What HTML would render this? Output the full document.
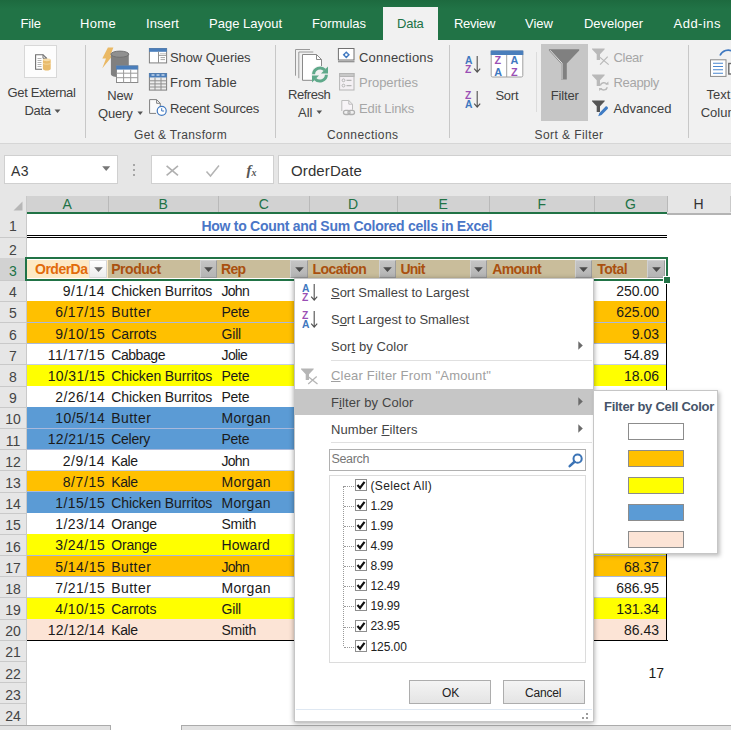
<!DOCTYPE html>
<html><head><meta charset="utf-8"><title>Excel Filter by Color</title>
<style>
html,body{margin:0;padding:0;}
body{width:731px;height:730px;position:relative;overflow:hidden;background:#fff;font-family:"Liberation Sans",sans-serif;}
div,svg{position:absolute;}
</style></head><body>
<div style="position:absolute;left:0.00px;top:0.00px;width:731.00px;height:40.00px;background:linear-gradient(#1d6a3f 0,#217346 9px);"></div>
<div style="position:absolute;left:382.90px;top:7.00px;width:55.10px;height:34.00px;background:#f1f1f1;"></div>
<div style="position:absolute;top:15.00px;line-height:17px;font-size:13.00px;color:#ffffff;white-space:nowrap;letter-spacing:-0.174px;left:20.50px;">File</div>
<div style="position:absolute;top:15.00px;line-height:17px;font-size:13.00px;color:#ffffff;white-space:nowrap;letter-spacing:0.331px;left:80.00px;">Home</div>
<div style="position:absolute;top:15.00px;line-height:17px;font-size:13.00px;color:#ffffff;white-space:nowrap;letter-spacing:0.081px;left:146.00px;">Insert</div>
<div style="position:absolute;top:15.00px;line-height:17px;font-size:13.00px;color:#ffffff;white-space:nowrap;letter-spacing:-0.000px;left:209.00px;">Page Layout</div>
<div style="position:absolute;top:15.00px;line-height:17px;font-size:13.00px;color:#ffffff;white-space:nowrap;letter-spacing:-0.022px;left:312.00px;">Formulas</div>
<div style="position:absolute;top:15.00px;line-height:17px;font-size:13.00px;color:#ffffff;white-space:nowrap;letter-spacing:-0.271px;left:454.00px;">Review</div>
<div style="position:absolute;top:15.00px;line-height:17px;font-size:13.00px;color:#ffffff;white-space:nowrap;letter-spacing:0.014px;left:525.00px;">View</div>
<div style="position:absolute;top:15.00px;line-height:17px;font-size:13.00px;color:#ffffff;white-space:nowrap;letter-spacing:-0.028px;left:584.00px;">Developer</div>
<div style="position:absolute;top:15.00px;line-height:17px;font-size:13.00px;color:#ffffff;white-space:nowrap;letter-spacing:0.489px;left:673.50px;">Add-ins</div>
<div style="position:absolute;top:15.00px;line-height:17px;font-size:13.00px;color:#217346;white-space:nowrap;letter-spacing:-0.240px;left:397.00px;">Data</div>
<div style="position:absolute;left:0.00px;top:40.00px;width:731.00px;height:103.00px;background:#f1f1f1;"></div>
<div style="position:absolute;left:0.00px;top:142.50px;width:731.00px;height:1.00px;background:#d6d6d6;"></div>
<div style="position:absolute;left:0.00px;top:143.50px;width:731.00px;height:52.50px;background:#e6e6e6;"></div>
<div style="position:absolute;left:85.00px;top:45.00px;width:1.00px;height:93.00px;background:#c8c8c8;"></div>
<div style="position:absolute;left:275.00px;top:45.00px;width:1.00px;height:93.00px;background:#c8c8c8;"></div>
<div style="position:absolute;left:449.30px;top:45.00px;width:1.00px;height:93.00px;background:#c8c8c8;"></div>
<div style="position:absolute;left:687.60px;top:45.00px;width:1.00px;height:93.00px;background:#c8c8c8;"></div>
<div style="position:absolute;left:535.50px;top:52.00px;width:1.00px;height:60.00px;background:#dcdcdc;"></div>
<div style="position:absolute;left:24.00px;top:45.20px;width:33.00px;height:32.50px;background:#fdfdfd;border:1px solid #d8d8d8;box-sizing:border-box;"></div>
<svg style="position:absolute;left:33.00px;top:53.00px" width="20" height="19" viewBox="0 0 20 19"><path d="M9 16.2H2.600V1.700h7.400l3.600 3.600v2" fill="#fff" stroke="#6e6e6e" stroke-width="1.100"/><path d="M10 1.700v3.600h3.600" fill="none" stroke="#6e6e6e"/>
<path d="M4.5 5.5h4M4.5 7.5h4M4.5 9.5h4M4.5 11.5h4M4.5 13.5h4" stroke="#b4b4b4" stroke-width="1"/>
<path d="M9.900 6.800v9.2c0 .9 1.700 1.5 3.900 1.5s3.900-.6 3.900-1.5V6.800z" fill="#e9bb6b"/><ellipse cx="13.800" cy="6.800" rx="3.900" ry="1.400" fill="#f6dca8"/><path d="M9.900 9.800c0 .9 1.700 1.400 3.900 1.400s3.900-.5 3.900-1.400" fill="none" stroke="#f6dca8" stroke-width=".8"/></svg>
<div style="position:absolute;top:84.10px;line-height:17px;font-size:13.00px;color:#404040;white-space:nowrap;letter-spacing:-0.355px;left:7.50px;">Get External</div>
<div style="position:absolute;top:101.90px;line-height:17px;font-size:13.00px;color:#404040;white-space:nowrap;letter-spacing:-0.365px;left:24.50px;">Data</div>
<svg style="position:absolute;left:54.20px;top:108.70px" width="8" height="5" viewBox="0 0 8 5"><path d="M0.5 0.5h6l-3 3.5z" fill="#555"/></svg>
<svg style="position:absolute;left:100.00px;top:46.00px" width="40" height="38" viewBox="0 0 40 38"><path d="M7.900 1.400h5.5l-3.100 8h2.5L2.3 22.3 6 12.5H2.3z" fill="#eab965"/>
<path d="M10.900 8.2v20c0 1.700 4 3 9 3s8.900-1.3 8.900-3v-20z" fill="#808080"/><ellipse cx="19.850" cy="8.2" rx="8.950" ry="3.100" fill="#909090" stroke="#6e6e6e" stroke-width=".9"/>
<rect x="16.5" y="19.900" width="21.3" height="16.600" fill="#fff" stroke="#8a8a8a"/><rect x="16.5" y="19.900" width="21.3" height="3.3" fill="#4a7ebb" stroke="#4a7ebb" stroke-width=".6"/>
<path d="M16.5 27.2h21.3M16.5 31.700h21.3M23.600 23.5v13M30.700 23.5v13" stroke="#9a9a9a" stroke-width="1"/></svg>
<div style="position:absolute;top:86.50px;line-height:17px;font-size:13.00px;color:#404040;white-space:nowrap;letter-spacing:-0.102px;left:107.20px;">New</div>
<div style="position:absolute;top:104.50px;line-height:17px;font-size:13.00px;color:#404040;white-space:nowrap;letter-spacing:-0.180px;left:98.00px;">Query</div>
<svg style="position:absolute;left:136.90px;top:110.70px" width="8" height="5" viewBox="0 0 8 5"><path d="M0.5 0.5h5.400l-2.700 3.400z" fill="#555"/></svg>
<svg style="position:absolute;left:148.00px;top:47.00px" width="20" height="18" viewBox="0 0 20 18"><rect x="1.400" y="1.5" width="17.2" height="14.400" fill="#fff" stroke="#808080"/><rect x="1.400" y="1.5" width="17.2" height="3" fill="#4a7ebb" stroke="#4a7ebb" stroke-width=".6"/>
<path d="M10.5 4.5v11.400M10.5 8.3h8" stroke="#909090"/><path d="M12.5 6.5h5" stroke="#a0a0a0" stroke-dasharray="1 1"/><path d="M12.5 10.600h4.5M12.5 12.600h4.5" stroke="#a8a8a8"/></svg>
<svg style="position:absolute;left:148.00px;top:72.00px" width="20" height="20" viewBox="0 0 20 20"><rect x="1.400" y="1.5" width="17.2" height="16.600" fill="#ececec" stroke="#808080"/><rect x="1.400" y="1.5" width="17.2" height="3.600" fill="#4a7ebb" stroke="#4a7ebb" stroke-width=".6"/>
<path d="M3.5 3h3M8.5 3h3M13.5 3h3" stroke="#fff" stroke-width="1"/>
<path d="M1.400 8.800h17.2M1.400 11.900h17.2M1.400 15h17.2M7 5.5v12.600M13 5.5v12.600" stroke="#8e8e8e"/></svg>
<svg style="position:absolute;left:148.00px;top:97.00px" width="20" height="20" viewBox="0 0 20 20"><path d="M8 16.400H1.600V2.600h7l3.700 3.700v3" fill="#fafafa" stroke="#808080"/><path d="M8.600 2.600v3.700h3.700" fill="none" stroke="#808080"/>
<circle cx="13.700" cy="13.800" r="4.5" fill="#fff" stroke="#3f78c0" stroke-width="1.2"/><path d="M13.700 11.2v2.800h2.400" fill="none" stroke="#3f78c0" stroke-width="1"/></svg>
<div style="position:absolute;top:48.50px;line-height:17px;font-size:13.00px;color:#404040;white-space:nowrap;letter-spacing:-0.096px;left:170.00px;">Show Queries</div>
<div style="position:absolute;top:74.00px;line-height:17px;font-size:13.00px;color:#404040;white-space:nowrap;letter-spacing:0.222px;left:170.00px;">From Table</div>
<div style="position:absolute;top:99.50px;line-height:17px;font-size:13.00px;color:#404040;white-space:nowrap;letter-spacing:-0.249px;left:170.00px;">Recent Sources</div>
<div style="position:absolute;top:126.60px;line-height:16px;font-size:12.00px;color:#444;white-space:nowrap;letter-spacing:0.332px;left:134.00px;">Get &amp; Transform</div>
<svg style="position:absolute;left:293.00px;top:47.00px" width="38" height="38" viewBox="0 0 38 38"><path d="M2.5 28.700V2.5h14.5" fill="none" stroke="#9a9a9a"/><path d="M5.800 31.2V5h14.5" fill="none" stroke="#9a9a9a"/>
<path d="M9.5 7.5h14l5 5v20.800h-19z" fill="#fff" stroke="#8a8a8a"/><path d="M23.5 7.5v5h5" fill="none" stroke="#8a8a8a"/>
<circle cx="27" cy="27.5" r="8.800" fill="#f1f1f1"/>
<path d="M20.600 27.3a6.5 6.5 0 0 1 11.3-4.2" fill="none" stroke="#5fa98a" stroke-width="3"/><path d="M35 19.5v7h-7z" fill="#5fa98a"/>
<path d="M33.400 27.700a6.5 6.5 0 0 1-11.3 4.2" fill="none" stroke="#5fa98a" stroke-width="3"/><path d="M19 35.5v-7h7z" fill="#5fa98a"/></svg>
<div style="position:absolute;top:86.40px;line-height:17px;font-size:13.00px;color:#404040;white-space:nowrap;letter-spacing:-0.474px;left:288.00px;">Refresh</div>
<div style="position:absolute;top:104.20px;line-height:17px;font-size:13.00px;color:#404040;white-space:nowrap;letter-spacing:0.084px;left:297.90px;">All</div>
<svg style="position:absolute;left:316.20px;top:110.30px" width="8" height="5" viewBox="0 0 8 5"><path d="M0.5 0.5h5.600l-2.800 3.5z" fill="#555"/></svg>
<svg style="position:absolute;left:336.00px;top:47.00px" width="20" height="18" viewBox="0 0 20 18"><rect x="2.400" y="1.5" width="15.600" height="11.5" fill="#fff" stroke="#707070"/><path d="M2 14.700h16.5" stroke="#8a8a8a" stroke-width="1.2"/>
<path d="M10.3 4.2l3.600 3.600-3.600 3.600-3.600-3.600z" fill="#3f78c0"/><circle cx="10.3" cy="7.800" r="1.3" fill="#fff"/></svg>
<svg style="position:absolute;left:336.00px;top:72.00px" width="20" height="20" viewBox="0 0 20 20"><rect x="3.600" y="1.5" width="14.400" height="16.5" fill="#f4f0f4" stroke="#b5b5b5"/><rect x="3.600" y="1.5" width="14.400" height="3" fill="#c8c8c8" stroke="#b5b5b5"/>
<circle cx="7.5" cy="8.3" r="1.400" fill="none" stroke="#b5b5b5"/><circle cx="7.5" cy="13.600" r="1.400" fill="none" stroke="#b5b5b5"/><path d="M10.5 8.3h5M10.5 13.600h5" stroke="#b5b5b5" stroke-width="1.2"/></svg>
<svg style="position:absolute;left:336.00px;top:97.00px" width="22" height="20" viewBox="0 0 22 20"><path d="M5.800 14V3.5h7l3.700 3.700v5.5" fill="#f7f4f7" stroke="#bdbdbd"/><path d="M12.800 3.5v3.700h3.700" fill="none" stroke="#bdbdbd"/>
<rect x="7.5" y="13.3" width="6.5" height="4.2" rx="2.100" fill="none" stroke="#b0b0b0" stroke-width="1.3"/><rect x="12" y="13.3" width="6.5" height="4.2" rx="2.100" fill="none" stroke="#b0b0b0" stroke-width="1.3"/></svg>
<div style="position:absolute;top:48.50px;line-height:17px;font-size:13.00px;color:#404040;white-space:nowrap;letter-spacing:0.203px;left:359.00px;">Connections</div>
<div style="position:absolute;top:74.00px;line-height:17px;font-size:13.00px;color:#a6a6a6;white-space:nowrap;letter-spacing:-0.025px;left:359.00px;">Properties</div>
<div style="position:absolute;top:99.50px;line-height:17px;font-size:13.00px;color:#a6a6a6;white-space:nowrap;letter-spacing:-0.136px;left:359.00px;">Edit Links</div>
<div style="position:absolute;top:126.60px;line-height:16px;font-size:12.00px;color:#444;white-space:nowrap;letter-spacing:0.436px;left:327.00px;">Connections</div>
<svg style="position:absolute;left:464.70px;top:55.10px" width="18" height="19" viewBox="0 0 18 19"><text x="0" y="8.6" font-family="Liberation Sans,sans-serif" font-size="10.3" font-weight="bold" fill="#3f78c0">A</text>
<text x="0" y="17.900" font-family="Liberation Sans,sans-serif" font-size="10.3" font-weight="bold" fill="#9a4fb4">Z</text>
<path d="M12.2 1v16M9.2 13.600l3 3.600 3-3.600" fill="none" stroke="#505050" stroke-width="1.100"/></svg>
<svg style="position:absolute;left:464.70px;top:89.60px" width="18" height="19" viewBox="0 0 18 19"><text x="0" y="8.6" font-family="Liberation Sans,sans-serif" font-size="10.3" font-weight="bold" fill="#9a4fb4">Z</text>
<text x="0" y="17.900" font-family="Liberation Sans,sans-serif" font-size="10.3" font-weight="bold" fill="#3f78c0">A</text>
<path d="M12.2 1v16M9.2 13.600l3 3.600 3-3.600" fill="none" stroke="#505050" stroke-width="1.100"/></svg>
<svg style="position:absolute;left:490.00px;top:49.00px" width="34" height="30" viewBox="0 0 34 30"><path d="M1.2 2v24.5a1.5 1.5 0 0 0 1.5 1.5h28.600a1.5 1.5 0 0 0 1.5-1.5V2z" fill="#fff" stroke="#a0a0a0"/><rect x="0.700" y="1.5" width="32.600" height="4.5" fill="#4a7ebb"/>
<path d="M16.700 6v22" stroke="#a0a0a0"/>
<text x="4.5" y="15.2" font-family="Liberation Sans,sans-serif" font-size="10.800" font-weight="bold" fill="#9a4fb4">Z</text><text x="4.2" y="26.600" font-family="Liberation Sans,sans-serif" font-size="10.800" font-weight="bold" fill="#3f78c0">A</text>
<text x="20.600" y="15.2" font-family="Liberation Sans,sans-serif" font-size="10.800" font-weight="bold" fill="#3f78c0">A</text><text x="21" y="26.600" font-family="Liberation Sans,sans-serif" font-size="10.800" font-weight="bold" fill="#9a4fb4">Z</text></svg>
<div style="position:absolute;top:86.70px;line-height:17px;font-size:13.00px;color:#404040;white-space:nowrap;letter-spacing:-0.210px;left:495.40px;">Sort</div>
<div style="position:absolute;left:541.20px;top:44.20px;width:46.60px;height:77.00px;background:#c6c6c6;"></div>
<svg style="position:absolute;left:547.00px;top:48.00px" width="36" height="33" viewBox="0 0 36 33"><path d="M1.900 1.2h30.3v1.3L19.800 15.600v15.800h-5.800V15.600L1.900 2.5z" fill="#808080"/><path d="M3 2.2L15 15.2v16" fill="none" stroke="#e4e4e4" stroke-width="1"/></svg>
<div style="position:absolute;top:86.70px;line-height:17px;font-size:13.00px;color:#404040;white-space:nowrap;letter-spacing:-0.148px;left:550.80px;">Filter</div>
<svg style="position:absolute;left:592.30px;top:48.00px" width="19" height="19" viewBox="0 0 19 19"><path d="M0 0.400h12.700v0.800L8 6.2v5.800H4.700V6.2L0 1.2z" fill="#b9b9b9"/><path d="M7.100 8.600l9.600 8M15.700 8.600l-7.600 8" stroke="#b9b9b9" stroke-width="1.2"/></svg>
<svg style="position:absolute;left:592.30px;top:73.80px" width="19" height="19" viewBox="0 0 19 19"><path d="M0 0.400h12.700v0.800L8 6.2v5.800H4.700V6.2L0 1.2z" fill="#b9b9b9"/><path d="M8.3 11.5a3.700 3.700 0 0 1 6.600-1.2M15.3 13.2a3.700 3.700 0 0 1-6.600 1.2" fill="none" stroke="#b9b9b9" stroke-width="1.400"/><path d="M13.3 10.5l3.3 0.3-0.3-3.2zM10.3 14.2l-3.3-0.3 0.3 3.2z" fill="#b9b9b9"/></svg>
<svg style="position:absolute;left:592.30px;top:99.60px" width="19" height="19" viewBox="0 0 19 19"><path d="M0 0.400h12.700v0.800L8 6.2v5.800H4.700V6.2L0 1.2z" fill="#555"/><path d="M6.2 16.3l1.2-3.400 6.2-6.3c1-1 3.2 1.2 2.2 2.2l-6.2 6.3z" fill="#3f7cc4"/></svg>
<div style="position:absolute;top:48.50px;line-height:17px;font-size:13.00px;color:#a6a6a6;white-space:nowrap;letter-spacing:-0.313px;left:613.50px;">Clear</div>
<div style="position:absolute;top:74.00px;line-height:17px;font-size:13.00px;color:#a6a6a6;white-space:nowrap;letter-spacing:-0.314px;left:613.50px;">Reapply</div>
<div style="position:absolute;top:99.50px;line-height:17px;font-size:13.00px;color:#404040;white-space:nowrap;letter-spacing:0.022px;left:613.50px;">Advanced</div>
<div style="position:absolute;top:126.60px;line-height:16px;font-size:12.00px;color:#444;white-space:nowrap;letter-spacing:0.435px;left:534.50px;">Sort &amp; Filter</div>
<svg style="position:absolute;left:709.00px;top:48.00px" width="24" height="30" viewBox="0 0 24 30"><path d="M11 7.5a9 9 0 0 1 13-4" fill="none" stroke="#3f78c0" stroke-width="1.600"/>
<rect x="1.5" y="11.800" width="15.5" height="16.600" fill="#fff" stroke="#8a8a8a"/><path d="M4 15.3h10M4 18.5h10M4 21.700h10M4 25.3h10" stroke="#4a86cf" stroke-width="1.100"/><rect x="19.800" y="15.5" width="6" height="10.5" fill="#fff" stroke="#6a6a6a" stroke-width="1.400"/></svg>
<div style="position:absolute;top:86.30px;line-height:17px;font-size:13.00px;color:#404040;white-space:nowrap;left:706.50px;">Text</div>
<div style="position:absolute;top:104.30px;line-height:17px;font-size:13.00px;color:#404040;white-space:nowrap;left:700.70px;">Columns</div>
<div style="position:absolute;left:4.00px;top:155.30px;width:113.50px;height:29.00px;background:#fff;border:1px solid #d0d0d0;box-sizing:border-box;"></div>
<div style="position:absolute;left:151.00px;top:155.30px;width:122.50px;height:29.00px;background:#fff;border:1px solid #d0d0d0;box-sizing:border-box;"></div>
<div style="position:absolute;left:277.50px;top:155.30px;width:460.00px;height:29.00px;background:#fff;border:1px solid #d0d0d0;box-sizing:border-box;"></div>
<div style="position:absolute;top:161.50px;line-height:18px;font-size:14.00px;color:#333;white-space:nowrap;letter-spacing:0.438px;left:11.00px;">A3</div>
<svg style="position:absolute;left:101.80px;top:166.20px" width="9" height="6" viewBox="0 0 9 6"><path d="M0.2 0.2h8l-4 4.900z" fill="#777"/></svg>
<div style="position:absolute;left:133.20px;top:164.00px;width:2.00px;height:2.00px;background:#a6a6a6;"></div>
<div style="position:absolute;left:133.20px;top:169.00px;width:2.00px;height:2.00px;background:#a6a6a6;"></div>
<div style="position:absolute;left:133.20px;top:173.60px;width:2.00px;height:2.00px;background:#a6a6a6;"></div>
<svg style="position:absolute;left:165.00px;top:163.50px" width="15" height="14" viewBox="0 0 15 14"><path d="M1.600 1.800l11.400 9.600M13 1.800L1.600 11.400" stroke="#b0b0b0" stroke-width="1.600" fill="none"/></svg>
<svg style="position:absolute;left:205.00px;top:163.50px" width="16" height="14" viewBox="0 0 16 14"><path d="M1.5 7.5l4 4.5L14 1.5" stroke="#b4b4b4" stroke-width="1.5" fill="none"/></svg>
<div style="position:absolute;top:160.50px;line-height:19px;font-size:15.00px;color:#555;white-space:nowrap;left:246.50px;font-family:'Liberation Serif',serif;font-style:italic;font-weight:bold;">f</div>
<div style="position:absolute;top:165.50px;line-height:14px;font-size:10.00px;color:#555;white-space:nowrap;left:251.50px;font-family:'Liberation Serif',serif;font-style:italic;font-weight:bold;">x</div>
<div style="position:absolute;top:161.00px;line-height:19px;font-size:15.00px;color:#333;white-space:nowrap;letter-spacing:0.108px;left:291.00px;">OrderDate</div>
<div style="position:absolute;left:0.00px;top:196.00px;width:731.00px;height:17.00px;background:#e6e6e6;"></div>
<div style="position:absolute;left:26.50px;top:196.00px;width:640.50px;height:16.00px;background:#d2d2d2;"></div>
<div style="position:absolute;left:667.00px;top:213.20px;width:64.00px;height:1.50px;background:#b4b4b4;"></div>
<div style="position:absolute;left:26.50px;top:211.80px;width:640.50px;height:2.50px;background:#217346;"></div>
<div style="position:absolute;top:195.00px;line-height:18px;font-size:14.00px;color:#217346;white-space:nowrap;left:67.25px;width:200px;margin-left:-100px;text-align:center;">A</div>
<div style="position:absolute;left:107.50px;top:196.00px;width:1.00px;height:16.00px;background:#b9b9b9;"></div>
<div style="position:absolute;top:195.00px;line-height:18px;font-size:14.00px;color:#217346;white-space:nowrap;left:163.25px;width:200px;margin-left:-100px;text-align:center;">B</div>
<div style="position:absolute;left:218.00px;top:196.00px;width:1.00px;height:16.00px;background:#b9b9b9;"></div>
<div style="position:absolute;top:195.00px;line-height:18px;font-size:14.00px;color:#217346;white-space:nowrap;left:263.75px;width:200px;margin-left:-100px;text-align:center;">C</div>
<div style="position:absolute;left:308.50px;top:196.00px;width:1.00px;height:16.00px;background:#b9b9b9;"></div>
<div style="position:absolute;top:195.00px;line-height:18px;font-size:14.00px;color:#217346;white-space:nowrap;left:353.00px;width:200px;margin-left:-100px;text-align:center;">D</div>
<div style="position:absolute;left:396.50px;top:196.00px;width:1.00px;height:16.00px;background:#b9b9b9;"></div>
<div style="position:absolute;top:195.00px;line-height:18px;font-size:14.00px;color:#217346;white-space:nowrap;left:443.25px;width:200px;margin-left:-100px;text-align:center;">E</div>
<div style="position:absolute;left:489.00px;top:196.00px;width:1.00px;height:16.00px;background:#b9b9b9;"></div>
<div style="position:absolute;top:195.00px;line-height:18px;font-size:14.00px;color:#217346;white-space:nowrap;left:541.75px;width:200px;margin-left:-100px;text-align:center;">F</div>
<div style="position:absolute;left:593.50px;top:196.00px;width:1.00px;height:16.00px;background:#b9b9b9;"></div>
<div style="position:absolute;top:195.00px;line-height:18px;font-size:14.00px;color:#217346;white-space:nowrap;left:630.50px;width:200px;margin-left:-100px;text-align:center;">G</div>
<div style="position:absolute;left:666.50px;top:196.00px;width:1.00px;height:16.00px;background:#b9b9b9;"></div>
<div style="position:absolute;top:195.00px;line-height:18px;font-size:14.00px;color:#333;white-space:nowrap;left:698.50px;width:200px;margin-left:-100px;text-align:center;">H</div>
<div style="position:absolute;left:729.50px;top:196.00px;width:1.00px;height:16.00px;background:#c9c9c9;"></div>
<svg style="position:absolute;left:13.00px;top:200.50px" width="10" height="10" viewBox="0 0 10 10"><path d="M9.5 0.5v9h-9z" fill="#b7b7b7"/></svg>
<div style="position:absolute;left:26.00px;top:196.00px;width:1.00px;height:17.00px;background:#c9c9c9;"></div>
<div style="position:absolute;left:0.00px;top:213.00px;width:26.50px;height:517.00px;background:#e6e6e6;"></div>
<div style="position:absolute;left:0.00px;top:236.50px;width:26.50px;height:1.00px;background:#c9c9c9;"></div>
<div style="position:absolute;top:217.20px;line-height:18px;font-size:14.00px;color:#444;white-space:nowrap;left:13.00px;width:200px;margin-left:-100px;text-align:center;">1</div>
<div style="position:absolute;left:0.00px;top:257.50px;width:26.50px;height:1.00px;background:#c9c9c9;"></div>
<div style="position:absolute;top:240.80px;line-height:18px;font-size:14.00px;color:#444;white-space:nowrap;left:13.00px;width:200px;margin-left:-100px;text-align:center;">2</div>
<div style="position:absolute;left:0.00px;top:258.00px;width:26.50px;height:22.20px;background:#d2d2d2;"></div>
<div style="position:absolute;left:25.00px;top:258.00px;width:2.00px;height:22.20px;background:#217346;"></div>
<div style="position:absolute;left:0.00px;top:279.70px;width:26.50px;height:1.00px;background:#c9c9c9;"></div>
<div style="position:absolute;top:262.00px;line-height:18px;font-size:14.00px;color:#217346;white-space:nowrap;left:13.00px;width:200px;margin-left:-100px;text-align:center;">3</div>
<div style="position:absolute;left:0.00px;top:300.88px;width:26.50px;height:1.00px;background:#c9c9c9;"></div>
<div style="position:absolute;top:283.29px;line-height:18px;font-size:14.00px;color:#444;white-space:nowrap;left:13.00px;width:200px;margin-left:-100px;text-align:center;">4</div>
<div style="position:absolute;left:0.00px;top:322.07px;width:26.50px;height:1.00px;background:#c9c9c9;"></div>
<div style="position:absolute;top:304.48px;line-height:18px;font-size:14.00px;color:#444;white-space:nowrap;left:13.00px;width:200px;margin-left:-100px;text-align:center;">5</div>
<div style="position:absolute;left:0.00px;top:343.25px;width:26.50px;height:1.00px;background:#c9c9c9;"></div>
<div style="position:absolute;top:325.66px;line-height:18px;font-size:14.00px;color:#444;white-space:nowrap;left:13.00px;width:200px;margin-left:-100px;text-align:center;">6</div>
<div style="position:absolute;left:0.00px;top:364.44px;width:26.50px;height:1.00px;background:#c9c9c9;"></div>
<div style="position:absolute;top:346.85px;line-height:18px;font-size:14.00px;color:#444;white-space:nowrap;left:13.00px;width:200px;margin-left:-100px;text-align:center;">7</div>
<div style="position:absolute;left:0.00px;top:385.62px;width:26.50px;height:1.00px;background:#c9c9c9;"></div>
<div style="position:absolute;top:368.03px;line-height:18px;font-size:14.00px;color:#444;white-space:nowrap;left:13.00px;width:200px;margin-left:-100px;text-align:center;">8</div>
<div style="position:absolute;left:0.00px;top:406.81px;width:26.50px;height:1.00px;background:#c9c9c9;"></div>
<div style="position:absolute;top:389.22px;line-height:18px;font-size:14.00px;color:#444;white-space:nowrap;left:13.00px;width:200px;margin-left:-100px;text-align:center;">9</div>
<div style="position:absolute;left:0.00px;top:428.00px;width:26.50px;height:1.00px;background:#c9c9c9;"></div>
<div style="position:absolute;top:410.40px;line-height:18px;font-size:14.00px;color:#444;white-space:nowrap;left:13.00px;width:200px;margin-left:-100px;text-align:center;">10</div>
<div style="position:absolute;left:0.00px;top:449.18px;width:26.50px;height:1.00px;background:#c9c9c9;"></div>
<div style="position:absolute;top:431.59px;line-height:18px;font-size:14.00px;color:#444;white-space:nowrap;left:13.00px;width:200px;margin-left:-100px;text-align:center;">11</div>
<div style="position:absolute;left:0.00px;top:470.37px;width:26.50px;height:1.00px;background:#c9c9c9;"></div>
<div style="position:absolute;top:452.77px;line-height:18px;font-size:14.00px;color:#444;white-space:nowrap;left:13.00px;width:200px;margin-left:-100px;text-align:center;">12</div>
<div style="position:absolute;left:0.00px;top:491.55px;width:26.50px;height:1.00px;background:#c9c9c9;"></div>
<div style="position:absolute;top:473.96px;line-height:18px;font-size:14.00px;color:#444;white-space:nowrap;left:13.00px;width:200px;margin-left:-100px;text-align:center;">13</div>
<div style="position:absolute;left:0.00px;top:512.74px;width:26.50px;height:1.00px;background:#c9c9c9;"></div>
<div style="position:absolute;top:495.14px;line-height:18px;font-size:14.00px;color:#444;white-space:nowrap;left:13.00px;width:200px;margin-left:-100px;text-align:center;">14</div>
<div style="position:absolute;left:0.00px;top:533.92px;width:26.50px;height:1.00px;background:#c9c9c9;"></div>
<div style="position:absolute;top:516.33px;line-height:18px;font-size:14.00px;color:#444;white-space:nowrap;left:13.00px;width:200px;margin-left:-100px;text-align:center;">15</div>
<div style="position:absolute;left:0.00px;top:555.11px;width:26.50px;height:1.00px;background:#c9c9c9;"></div>
<div style="position:absolute;top:537.51px;line-height:18px;font-size:14.00px;color:#444;white-space:nowrap;left:13.00px;width:200px;margin-left:-100px;text-align:center;">16</div>
<div style="position:absolute;left:0.00px;top:576.29px;width:26.50px;height:1.00px;background:#c9c9c9;"></div>
<div style="position:absolute;top:558.70px;line-height:18px;font-size:14.00px;color:#444;white-space:nowrap;left:13.00px;width:200px;margin-left:-100px;text-align:center;">17</div>
<div style="position:absolute;left:0.00px;top:597.47px;width:26.50px;height:1.00px;background:#c9c9c9;"></div>
<div style="position:absolute;top:579.88px;line-height:18px;font-size:14.00px;color:#444;white-space:nowrap;left:13.00px;width:200px;margin-left:-100px;text-align:center;">18</div>
<div style="position:absolute;left:0.00px;top:618.66px;width:26.50px;height:1.00px;background:#c9c9c9;"></div>
<div style="position:absolute;top:601.07px;line-height:18px;font-size:14.00px;color:#444;white-space:nowrap;left:13.00px;width:200px;margin-left:-100px;text-align:center;">19</div>
<div style="position:absolute;left:0.00px;top:639.85px;width:26.50px;height:1.00px;background:#c9c9c9;"></div>
<div style="position:absolute;top:622.25px;line-height:18px;font-size:14.00px;color:#444;white-space:nowrap;left:13.00px;width:200px;margin-left:-100px;text-align:center;">20</div>
<div style="position:absolute;left:0.00px;top:661.03px;width:26.50px;height:1.00px;background:#c9c9c9;"></div>
<div style="position:absolute;top:643.44px;line-height:18px;font-size:14.00px;color:#444;white-space:nowrap;left:13.00px;width:200px;margin-left:-100px;text-align:center;">21</div>
<div style="position:absolute;left:0.00px;top:682.21px;width:26.50px;height:1.00px;background:#c9c9c9;"></div>
<div style="position:absolute;top:664.62px;line-height:18px;font-size:14.00px;color:#444;white-space:nowrap;left:13.00px;width:200px;margin-left:-100px;text-align:center;">22</div>
<div style="position:absolute;left:0.00px;top:703.40px;width:26.50px;height:1.00px;background:#c9c9c9;"></div>
<div style="position:absolute;top:685.81px;line-height:18px;font-size:14.00px;color:#444;white-space:nowrap;left:13.00px;width:200px;margin-left:-100px;text-align:center;">23</div>
<div style="position:absolute;left:0.00px;top:724.70px;width:26.50px;height:1.00px;background:#c9c9c9;"></div>
<div style="position:absolute;top:707.05px;line-height:18px;font-size:14.00px;color:#444;white-space:nowrap;left:13.00px;width:200px;margin-left:-100px;text-align:center;">24</div>
<div style="position:absolute;left:26.00px;top:213.00px;width:1.00px;height:512.00px;background:#c9c9c9;"></div>
<div style="position:absolute;left:27.00px;top:214.00px;width:639.00px;height:23.00px;background:#fff;"></div>
<div style="position:absolute;top:217.00px;line-height:18px;font-size:14.00px;color:#4a76c7;white-space:nowrap;letter-spacing:-0.281px;font-weight:bold;left:201.50px;">How to Count and Sum Colored cells in Excel</div>
<div style="position:absolute;left:27.00px;top:234.50px;width:640.00px;height:1.20px;background:#000;"></div>
<div style="position:absolute;left:27.00px;top:236.80px;width:640.00px;height:1.20px;background:#000;"></div>
<div style="position:absolute;left:27.00px;top:238.00px;width:639.00px;height:19.50px;background:#fff;"></div>
<div style="position:absolute;left:27.00px;top:260.20px;width:638.20px;height:17.60px;background:#c9bd9b;"></div>
<div style="position:absolute;left:27.00px;top:260.20px;width:81.00px;height:17.60px;background:#fde9c4;"></div>
<div style="position:absolute;top:259.90px;line-height:18px;font-size:14.00px;color:#e26b0a;white-space:nowrap;letter-spacing:-0.503px;font-weight:bold;left:35.00px;">OrderDa</div>
<div style="position:absolute;top:259.90px;line-height:18px;font-size:14.00px;color:#a9500f;white-space:nowrap;letter-spacing:-0.484px;font-weight:bold;left:111.25px;">Product</div>
<div style="position:absolute;top:259.90px;line-height:18px;font-size:14.00px;color:#a9500f;white-space:nowrap;letter-spacing:-0.649px;font-weight:bold;left:221.00px;">Rep</div>
<div style="position:absolute;top:259.90px;line-height:18px;font-size:14.00px;color:#a9500f;white-space:nowrap;letter-spacing:-0.573px;font-weight:bold;left:312.50px;">Location</div>
<div style="position:absolute;top:259.90px;line-height:18px;font-size:14.00px;color:#a9500f;white-space:nowrap;letter-spacing:-0.804px;font-weight:bold;left:400.50px;">Unit</div>
<div style="position:absolute;top:259.90px;line-height:18px;font-size:14.00px;color:#a9500f;white-space:nowrap;letter-spacing:-0.688px;font-weight:bold;left:492.25px;">Amount</div>
<div style="position:absolute;top:259.90px;line-height:18px;font-size:14.00px;color:#a9500f;white-space:nowrap;letter-spacing:-0.481px;font-weight:bold;left:597.25px;">Total</div>
<div style="position:absolute;left:89.00px;top:260.20px;width:17.50px;height:17.60px;background:linear-gradient(#ffffff,#ececec);border:1px solid #e2e2e2;border-right-color:#d6d6d6;border-bottom-color:#d6d6d6;box-sizing:border-box;"></div>
<svg style="position:absolute;left:93.50px;top:266.70px" width="9" height="6" viewBox="0 0 9 6"><path d="M0.2 0.3h8.600l-4.3 4.600z" fill="#6a6a6a"/></svg>
<div style="position:absolute;left:199.75px;top:260.20px;width:17.50px;height:17.60px;background:linear-gradient(#c4c4c4,#b4b4b4);border:1px solid #d0d0d0;border-right-color:#9c9c9c;border-bottom-color:#9c9c9c;box-sizing:border-box;"></div>
<svg style="position:absolute;left:204.25px;top:266.70px" width="9" height="6" viewBox="0 0 9 6"><path d="M0.2 0.3h8.600l-4.3 4.600z" fill="#4a4a4a"/></svg>
<div style="position:absolute;left:290.25px;top:260.20px;width:17.50px;height:17.60px;background:linear-gradient(#c4c4c4,#b4b4b4);border:1px solid #d0d0d0;border-right-color:#9c9c9c;border-bottom-color:#9c9c9c;box-sizing:border-box;"></div>
<svg style="position:absolute;left:294.75px;top:266.70px" width="9" height="6" viewBox="0 0 9 6"><path d="M0.2 0.3h8.600l-4.3 4.600z" fill="#4a4a4a"/></svg>
<div style="position:absolute;left:378.50px;top:260.20px;width:17.50px;height:17.60px;background:linear-gradient(#c4c4c4,#b4b4b4);border:1px solid #d0d0d0;border-right-color:#9c9c9c;border-bottom-color:#9c9c9c;box-sizing:border-box;"></div>
<svg style="position:absolute;left:383.00px;top:266.70px" width="9" height="6" viewBox="0 0 9 6"><path d="M0.2 0.3h8.600l-4.3 4.600z" fill="#4a4a4a"/></svg>
<div style="position:absolute;left:469.75px;top:260.20px;width:17.50px;height:17.60px;background:linear-gradient(#c4c4c4,#b4b4b4);border:1px solid #d0d0d0;border-right-color:#9c9c9c;border-bottom-color:#9c9c9c;box-sizing:border-box;"></div>
<svg style="position:absolute;left:474.25px;top:266.70px" width="9" height="6" viewBox="0 0 9 6"><path d="M0.2 0.3h8.600l-4.3 4.600z" fill="#4a4a4a"/></svg>
<div style="position:absolute;left:574.50px;top:260.20px;width:17.50px;height:17.60px;background:linear-gradient(#c4c4c4,#b4b4b4);border:1px solid #d0d0d0;border-right-color:#9c9c9c;border-bottom-color:#9c9c9c;box-sizing:border-box;"></div>
<svg style="position:absolute;left:579.00px;top:266.70px" width="9" height="6" viewBox="0 0 9 6"><path d="M0.2 0.3h8.600l-4.3 4.600z" fill="#4a4a4a"/></svg>
<div style="position:absolute;left:647.40px;top:260.20px;width:17.50px;height:17.60px;background:linear-gradient(#c4c4c4,#b4b4b4);border:1px solid #d0d0d0;border-right-color:#9c9c9c;border-bottom-color:#9c9c9c;box-sizing:border-box;"></div>
<svg style="position:absolute;left:651.90px;top:266.70px" width="9" height="6" viewBox="0 0 9 6"><path d="M0.2 0.3h8.600l-4.3 4.600z" fill="#4a4a4a"/></svg>
<div style="position:absolute;left:27.00px;top:280.20px;width:639.30px;height:21.19px;background:#ffffff;"></div>
<div style="position:absolute;left:27.00px;top:300.78px;width:639.30px;height:1.00px;background:#c5d0e6;"></div>
<div style="position:absolute;top:282.19px;line-height:18px;font-size:14.00px;color:#1a1a1a;white-space:nowrap;letter-spacing:0.596px;left:62.70px;">9/1/14</div>
<div style="position:absolute;top:282.19px;line-height:18px;font-size:14.00px;color:#1a1a1a;white-space:nowrap;letter-spacing:-0.106px;left:111.25px;">Chicken Burritos</div>
<div style="position:absolute;top:282.19px;line-height:18px;font-size:14.00px;color:#1a1a1a;white-space:nowrap;letter-spacing:-0.715px;left:221.50px;">John</div>
<div style="position:absolute;top:282.19px;line-height:18px;font-size:14.00px;color:#1a1a1a;white-space:nowrap;right:72.00px;text-align:right;">250.00</div>
<div style="position:absolute;left:27.00px;top:301.38px;width:639.30px;height:21.19px;background:#ffc000;"></div>
<div style="position:absolute;left:27.00px;top:321.97px;width:639.30px;height:1.00px;background:#a9b9dc;"></div>
<div style="position:absolute;top:303.38px;line-height:18px;font-size:14.00px;color:#1a1a1a;white-space:nowrap;letter-spacing:0.470px;left:55.20px;">6/17/15</div>
<div style="position:absolute;top:303.38px;line-height:18px;font-size:14.00px;color:#1a1a1a;white-space:nowrap;letter-spacing:0.441px;left:111.25px;">Butter</div>
<div style="position:absolute;top:303.38px;line-height:18px;font-size:14.00px;color:#1a1a1a;white-space:nowrap;letter-spacing:-0.262px;left:221.50px;">Pete</div>
<div style="position:absolute;top:303.38px;line-height:18px;font-size:14.00px;color:#1a1a1a;white-space:nowrap;right:72.00px;text-align:right;">625.00</div>
<div style="position:absolute;left:27.00px;top:322.57px;width:639.30px;height:21.19px;background:#ffc000;"></div>
<div style="position:absolute;left:27.00px;top:343.15px;width:639.30px;height:1.00px;background:#a9b9dc;"></div>
<div style="position:absolute;top:324.56px;line-height:18px;font-size:14.00px;color:#1a1a1a;white-space:nowrap;letter-spacing:0.470px;left:55.20px;">9/10/15</div>
<div style="position:absolute;top:324.56px;line-height:18px;font-size:14.00px;color:#1a1a1a;white-space:nowrap;letter-spacing:-0.128px;left:111.25px;">Carrots</div>
<div style="position:absolute;top:324.56px;line-height:18px;font-size:14.00px;color:#1a1a1a;white-space:nowrap;letter-spacing:-0.180px;left:221.50px;">Gill</div>
<div style="position:absolute;top:324.56px;line-height:18px;font-size:14.00px;color:#1a1a1a;white-space:nowrap;right:72.00px;text-align:right;">9.03</div>
<div style="position:absolute;left:27.00px;top:343.75px;width:639.30px;height:21.19px;background:#ffffff;"></div>
<div style="position:absolute;left:27.00px;top:364.34px;width:639.30px;height:1.00px;background:#c5d0e6;"></div>
<div style="position:absolute;top:345.75px;line-height:18px;font-size:14.00px;color:#1a1a1a;white-space:nowrap;letter-spacing:0.505px;left:47.70px;">11/17/15</div>
<div style="position:absolute;top:345.75px;line-height:18px;font-size:14.00px;color:#1a1a1a;white-space:nowrap;letter-spacing:-0.440px;left:111.25px;">Cabbage</div>
<div style="position:absolute;top:345.75px;line-height:18px;font-size:14.00px;color:#1a1a1a;white-space:nowrap;letter-spacing:-0.609px;left:221.50px;">Jolie</div>
<div style="position:absolute;top:345.75px;line-height:18px;font-size:14.00px;color:#1a1a1a;white-space:nowrap;right:72.00px;text-align:right;">54.89</div>
<div style="position:absolute;left:27.00px;top:364.94px;width:639.30px;height:21.19px;background:#ffff00;"></div>
<div style="position:absolute;left:27.00px;top:385.52px;width:639.30px;height:1.00px;background:#a9b9dc;"></div>
<div style="position:absolute;top:366.93px;line-height:18px;font-size:14.00px;color:#1a1a1a;white-space:nowrap;letter-spacing:0.375px;left:47.70px;">10/31/15</div>
<div style="position:absolute;top:366.93px;line-height:18px;font-size:14.00px;color:#1a1a1a;white-space:nowrap;letter-spacing:-0.106px;left:111.25px;">Chicken Burritos</div>
<div style="position:absolute;top:366.93px;line-height:18px;font-size:14.00px;color:#1a1a1a;white-space:nowrap;letter-spacing:-0.262px;left:221.50px;">Pete</div>
<div style="position:absolute;top:366.93px;line-height:18px;font-size:14.00px;color:#1a1a1a;white-space:nowrap;right:72.00px;text-align:right;">18.06</div>
<div style="position:absolute;left:27.00px;top:386.12px;width:639.30px;height:21.18px;background:#ffffff;"></div>
<div style="position:absolute;left:27.00px;top:406.71px;width:639.30px;height:1.00px;background:#c5d0e6;"></div>
<div style="position:absolute;top:388.12px;line-height:18px;font-size:14.00px;color:#1a1a1a;white-space:nowrap;letter-spacing:0.470px;left:55.20px;">2/26/14</div>
<div style="position:absolute;top:388.12px;line-height:18px;font-size:14.00px;color:#1a1a1a;white-space:nowrap;letter-spacing:-0.106px;left:111.25px;">Chicken Burritos</div>
<div style="position:absolute;top:388.12px;line-height:18px;font-size:14.00px;color:#1a1a1a;white-space:nowrap;letter-spacing:-0.262px;left:221.50px;">Pete</div>
<div style="position:absolute;left:27.00px;top:407.31px;width:639.30px;height:21.19px;background:#5b9bd5;"></div>
<div style="position:absolute;left:27.00px;top:427.89px;width:639.30px;height:1.00px;background:#a9b9dc;"></div>
<div style="position:absolute;top:409.30px;line-height:18px;font-size:14.00px;color:#1a1a1a;white-space:nowrap;letter-spacing:0.470px;left:55.20px;">10/5/14</div>
<div style="position:absolute;top:409.30px;line-height:18px;font-size:14.00px;color:#1a1a1a;white-space:nowrap;letter-spacing:0.441px;left:111.25px;">Butter</div>
<div style="position:absolute;top:409.30px;line-height:18px;font-size:14.00px;color:#1a1a1a;white-space:nowrap;letter-spacing:0.338px;left:221.50px;">Morgan</div>
<div style="position:absolute;left:27.00px;top:428.50px;width:639.30px;height:21.18px;background:#5b9bd5;"></div>
<div style="position:absolute;left:27.00px;top:449.08px;width:639.30px;height:1.00px;background:#a9b9dc;"></div>
<div style="position:absolute;top:430.49px;line-height:18px;font-size:14.00px;color:#1a1a1a;white-space:nowrap;letter-spacing:0.375px;left:47.70px;">12/21/15</div>
<div style="position:absolute;top:430.49px;line-height:18px;font-size:14.00px;color:#1a1a1a;white-space:nowrap;letter-spacing:-0.284px;left:111.25px;">Celery</div>
<div style="position:absolute;top:430.49px;line-height:18px;font-size:14.00px;color:#1a1a1a;white-space:nowrap;letter-spacing:-0.262px;left:221.50px;">Pete</div>
<div style="position:absolute;left:27.00px;top:449.68px;width:639.30px;height:21.19px;background:#ffffff;"></div>
<div style="position:absolute;left:27.00px;top:470.26px;width:639.30px;height:1.00px;background:#c5d0e6;"></div>
<div style="position:absolute;top:451.67px;line-height:18px;font-size:14.00px;color:#1a1a1a;white-space:nowrap;letter-spacing:0.596px;left:62.70px;">2/9/14</div>
<div style="position:absolute;top:451.67px;line-height:18px;font-size:14.00px;color:#1a1a1a;white-space:nowrap;letter-spacing:-0.443px;left:111.25px;">Kale</div>
<div style="position:absolute;top:451.67px;line-height:18px;font-size:14.00px;color:#1a1a1a;white-space:nowrap;letter-spacing:-0.715px;left:221.50px;">John</div>
<div style="position:absolute;left:27.00px;top:470.87px;width:639.30px;height:21.18px;background:#ffc000;"></div>
<div style="position:absolute;left:27.00px;top:491.45px;width:639.30px;height:1.00px;background:#a9b9dc;"></div>
<div style="position:absolute;top:472.86px;line-height:18px;font-size:14.00px;color:#1a1a1a;white-space:nowrap;letter-spacing:0.596px;left:62.70px;">8/7/15</div>
<div style="position:absolute;top:472.86px;line-height:18px;font-size:14.00px;color:#1a1a1a;white-space:nowrap;letter-spacing:-0.443px;left:111.25px;">Kale</div>
<div style="position:absolute;top:472.86px;line-height:18px;font-size:14.00px;color:#1a1a1a;white-space:nowrap;letter-spacing:0.338px;left:221.50px;">Morgan</div>
<div style="position:absolute;left:27.00px;top:492.05px;width:639.30px;height:21.19px;background:#5b9bd5;"></div>
<div style="position:absolute;left:27.00px;top:512.63px;width:639.30px;height:1.00px;background:#a9b9dc;"></div>
<div style="position:absolute;top:494.04px;line-height:18px;font-size:14.00px;color:#1a1a1a;white-space:nowrap;letter-spacing:0.470px;left:55.20px;">1/15/15</div>
<div style="position:absolute;top:494.04px;line-height:18px;font-size:14.00px;color:#1a1a1a;white-space:nowrap;letter-spacing:-0.106px;left:111.25px;">Chicken Burritos</div>
<div style="position:absolute;top:494.04px;line-height:18px;font-size:14.00px;color:#1a1a1a;white-space:nowrap;letter-spacing:0.338px;left:221.50px;">Morgan</div>
<div style="position:absolute;left:27.00px;top:513.24px;width:639.30px;height:21.18px;background:#ffffff;"></div>
<div style="position:absolute;left:27.00px;top:533.82px;width:639.30px;height:1.00px;background:#c5d0e6;"></div>
<div style="position:absolute;top:515.23px;line-height:18px;font-size:14.00px;color:#1a1a1a;white-space:nowrap;letter-spacing:0.470px;left:55.20px;">1/23/14</div>
<div style="position:absolute;top:515.23px;line-height:18px;font-size:14.00px;color:#1a1a1a;white-space:nowrap;letter-spacing:-0.158px;left:111.25px;">Orange</div>
<div style="position:absolute;top:515.23px;line-height:18px;font-size:14.00px;color:#1a1a1a;white-space:nowrap;letter-spacing:-0.257px;left:221.50px;">Smith</div>
<div style="position:absolute;left:27.00px;top:534.42px;width:639.30px;height:21.19px;background:#ffff00;"></div>
<div style="position:absolute;left:27.00px;top:555.00px;width:639.30px;height:1.00px;background:#a9b9dc;"></div>
<div style="position:absolute;top:536.41px;line-height:18px;font-size:14.00px;color:#1a1a1a;white-space:nowrap;letter-spacing:0.470px;left:55.20px;">3/24/15</div>
<div style="position:absolute;top:536.41px;line-height:18px;font-size:14.00px;color:#1a1a1a;white-space:nowrap;letter-spacing:-0.158px;left:111.25px;">Orange</div>
<div style="position:absolute;top:536.41px;line-height:18px;font-size:14.00px;color:#1a1a1a;white-space:nowrap;letter-spacing:0.026px;left:221.50px;">Howard</div>
<div style="position:absolute;left:27.00px;top:555.61px;width:639.30px;height:21.18px;background:#ffc000;"></div>
<div style="position:absolute;left:27.00px;top:576.19px;width:639.30px;height:1.00px;background:#a9b9dc;"></div>
<div style="position:absolute;top:557.60px;line-height:18px;font-size:14.00px;color:#1a1a1a;white-space:nowrap;letter-spacing:0.470px;left:55.20px;">5/14/15</div>
<div style="position:absolute;top:557.60px;line-height:18px;font-size:14.00px;color:#1a1a1a;white-space:nowrap;letter-spacing:0.441px;left:111.25px;">Butter</div>
<div style="position:absolute;top:557.60px;line-height:18px;font-size:14.00px;color:#1a1a1a;white-space:nowrap;letter-spacing:-0.715px;left:221.50px;">John</div>
<div style="position:absolute;top:557.60px;line-height:18px;font-size:14.00px;color:#1a1a1a;white-space:nowrap;right:72.00px;text-align:right;">68.37</div>
<div style="position:absolute;left:27.00px;top:576.79px;width:639.30px;height:21.18px;background:#ffffff;"></div>
<div style="position:absolute;left:27.00px;top:597.37px;width:639.30px;height:1.00px;background:#c5d0e6;"></div>
<div style="position:absolute;top:578.78px;line-height:18px;font-size:14.00px;color:#1a1a1a;white-space:nowrap;letter-spacing:0.470px;left:55.20px;">7/21/15</div>
<div style="position:absolute;top:578.78px;line-height:18px;font-size:14.00px;color:#1a1a1a;white-space:nowrap;letter-spacing:0.441px;left:111.25px;">Butter</div>
<div style="position:absolute;top:578.78px;line-height:18px;font-size:14.00px;color:#1a1a1a;white-space:nowrap;letter-spacing:0.338px;left:221.50px;">Morgan</div>
<div style="position:absolute;top:578.78px;line-height:18px;font-size:14.00px;color:#1a1a1a;white-space:nowrap;right:72.00px;text-align:right;">686.95</div>
<div style="position:absolute;left:27.00px;top:597.97px;width:639.30px;height:21.19px;background:#ffff00;"></div>
<div style="position:absolute;left:27.00px;top:618.56px;width:639.30px;height:1.00px;background:#a9b9dc;"></div>
<div style="position:absolute;top:599.97px;line-height:18px;font-size:14.00px;color:#1a1a1a;white-space:nowrap;letter-spacing:0.470px;left:55.20px;">4/10/15</div>
<div style="position:absolute;top:599.97px;line-height:18px;font-size:14.00px;color:#1a1a1a;white-space:nowrap;letter-spacing:-0.128px;left:111.25px;">Carrots</div>
<div style="position:absolute;top:599.97px;line-height:18px;font-size:14.00px;color:#1a1a1a;white-space:nowrap;letter-spacing:-0.180px;left:221.50px;">Gill</div>
<div style="position:absolute;top:599.97px;line-height:18px;font-size:14.00px;color:#1a1a1a;white-space:nowrap;right:72.00px;text-align:right;">131.34</div>
<div style="position:absolute;left:27.00px;top:619.16px;width:639.30px;height:21.19px;background:#fce4d6;"></div>
<div style="position:absolute;top:621.15px;line-height:18px;font-size:14.00px;color:#1a1a1a;white-space:nowrap;letter-spacing:0.375px;left:47.70px;">12/12/14</div>
<div style="position:absolute;top:621.15px;line-height:18px;font-size:14.00px;color:#1a1a1a;white-space:nowrap;letter-spacing:-0.443px;left:111.25px;">Kale</div>
<div style="position:absolute;top:621.15px;line-height:18px;font-size:14.00px;color:#1a1a1a;white-space:nowrap;letter-spacing:-0.257px;left:221.50px;">Smith</div>
<div style="position:absolute;top:621.15px;line-height:18px;font-size:14.00px;color:#1a1a1a;white-space:nowrap;right:72.00px;text-align:right;">86.43</div>
<div style="position:absolute;left:27.00px;top:639.55px;width:640.50px;height:1.30px;background:#000;"></div>
<div style="position:absolute;left:666.20px;top:282.00px;width:1.30px;height:358.85px;background:#000;"></div>
<div style="position:absolute;top:664.40px;line-height:18px;font-size:14.00px;color:#1a1a1a;white-space:nowrap;right:67.00px;text-align:right;">17</div>
<div style="position:absolute;left:25.30px;top:256.80px;width:643.00px;height:24.40px;border:2px solid #217346;box-sizing:border-box;"></div>
<div style="position:absolute;left:662.80px;top:275.80px;width:6.50px;height:6.20px;background:#217346;border:1px solid #fff;box-sizing:content-box;"></div>
<div style="position:absolute;left:0.00px;top:725.40px;width:731.00px;height:5.00px;background:#e2e2e2;border-top:1px solid #ababab;box-sizing:border-box;"></div>
<div style="position:absolute;left:110.00px;top:725.40px;width:71.50px;height:5.00px;background:#fff;border-left:1px solid #ababab;border-right:1px solid #ababab;box-sizing:border-box;"></div>
<div style="position:absolute;left:294.1px;top:278.3px;width:299.5px;height:444.2px;background:#fff;border:1px solid #c6c6c6;box-sizing:border-box;box-shadow:0 1px 5px rgba(0,0,0,.38)"></div>
<svg style="position:absolute;left:301.60px;top:283.00px" width="18" height="19" viewBox="0 0 18 19"><text x="0" y="8.6" font-family="Liberation Sans,sans-serif" font-size="10.3" font-weight="bold" fill="#3f78c0">A</text>
<text x="0" y="17.900" font-family="Liberation Sans,sans-serif" font-size="10.3" font-weight="bold" fill="#9a4fb4">Z</text>
<path d="M12.2 1v16M9.2 13.600l3 3.600 3-3.600" fill="none" stroke="#505050" stroke-width="1.100"/></svg>
<svg style="position:absolute;left:301.60px;top:309.60px" width="18" height="19" viewBox="0 0 18 19"><text x="0" y="8.6" font-family="Liberation Sans,sans-serif" font-size="10.3" font-weight="bold" fill="#9a4fb4">Z</text>
<text x="0" y="17.900" font-family="Liberation Sans,sans-serif" font-size="10.3" font-weight="bold" fill="#3f78c0">A</text>
<path d="M12.2 1v16M9.2 13.600l3 3.600 3-3.600" fill="none" stroke="#505050" stroke-width="1.100"/></svg>
<div style="position:absolute;top:284.00px;line-height:17px;font-size:13.00px;color:#444;white-space:nowrap;letter-spacing:-0.030px;left:331.00px;"><span style="text-decoration:underline">S</span>ort Smallest to Largest</div>
<div style="position:absolute;top:310.50px;line-height:17px;font-size:13.00px;color:#444;white-space:nowrap;letter-spacing:-0.030px;left:331.00px;">S<span style="text-decoration:underline">o</span>rt Largest to Smallest</div>
<div style="position:absolute;top:337.50px;line-height:17px;font-size:13.00px;color:#444;white-space:nowrap;letter-spacing:0.088px;left:331.00px;">Sor<span style="text-decoration:underline">t</span> by Color</div>
<div style="position:absolute;left:331.00px;top:359.50px;width:261.00px;height:1.00px;background:#e0e0e0;"></div>
<svg style="position:absolute;left:301.00px;top:367.50px" width="19" height="19" viewBox="0 0 19 19"><path d="M0 0.400h12.700v0.800L8 6.2v5.800H4.700V6.2L0 1.2z" fill="#b5b5b5"/><path d="M7 8.5l9.5 7.5M15.700 8.5l-8.5 7.5" stroke="#b5b5b5" stroke-width="1.3"/></svg>
<div style="position:absolute;top:366.50px;line-height:17px;font-size:13.00px;color:#a0a0a0;white-space:nowrap;letter-spacing:0.187px;left:331.00px;"><span style="text-decoration:underline">C</span>lear Filter From &quot;Amount&quot;</div>
<div style="position:absolute;left:295.10px;top:388.90px;width:297.50px;height:26.00px;background:#c6c6c6;"></div>
<div style="position:absolute;top:393.50px;line-height:17px;font-size:13.00px;color:#444;white-space:nowrap;letter-spacing:0.106px;left:331.00px;">F<span style="text-decoration:underline">i</span>lter by Color</div>
<div style="position:absolute;top:420.50px;line-height:17px;font-size:13.00px;color:#444;white-space:nowrap;letter-spacing:0.090px;left:331.00px;">Number <span style="text-decoration:underline">F</span>ilters</div>
<div style="position:absolute;left:331.00px;top:442.00px;width:261.00px;height:1.00px;background:#e0e0e0;"></div>
<svg style="position:absolute;left:577.50px;top:341.40px" width="6" height="9" viewBox="0 0 6 9"><path d="M0.3 0.3v8.400l4.5-4.2z" fill="#6a6a6a"/></svg>
<svg style="position:absolute;left:577.50px;top:397.40px" width="6" height="9" viewBox="0 0 6 9"><path d="M0.3 0.3v8.400l4.5-4.2z" fill="#6a6a6a"/></svg>
<svg style="position:absolute;left:577.50px;top:424.40px" width="6" height="9" viewBox="0 0 6 9"><path d="M0.3 0.3v8.400l4.5-4.2z" fill="#6a6a6a"/></svg>
<div style="position:absolute;left:329.00px;top:449.20px;width:257.00px;height:22.00px;background:#fff;border:1px solid #b0b0b0;box-sizing:border-box;"></div>
<div style="position:absolute;top:451.25px;line-height:16px;font-size:12.50px;color:#777;white-space:nowrap;letter-spacing:-0.351px;left:331.50px;">Search</div>
<svg style="position:absolute;left:567.00px;top:452.00px" width="17" height="17" viewBox="0 0 17 17"><circle cx="10.600" cy="6.700" r="4.100" fill="none" stroke="#3c74b6" stroke-width="2"/><path d="M7.5 9.800l-4.800 4.3" stroke="#3c74b6" stroke-width="2.600" stroke-linecap="round"/></svg>
<div style="position:absolute;left:329.00px;top:475.00px;width:257.00px;height:188.00px;background:#fff;border:1px solid #dcdcdc;box-sizing:border-box;"></div>
<div style="position:absolute;left:343.20px;top:486.00px;width:0.00px;height:160.00px;border-left:1px dotted #9a9a9a;"></div>
<div style="position:absolute;left:344.00px;top:486.00px;width:10.00px;height:0.00px;border-top:1px dotted #9a9a9a;"></div>
<div style="position:absolute;left:354.50px;top:479.00px;width:12.00px;height:12.00px;background:#fff;border:1px solid #8e8e8e;box-sizing:border-box;"></div>
<svg style="position:absolute;left:355.50px;top:480.00px" width="10" height="10" viewBox="0 0 10 10"><path d="M1.5 5l2.5 3L8.5 1.800" fill="none" stroke="#111" stroke-width="2.2"/></svg>
<div style="position:absolute;top:477.90px;line-height:16px;font-size:12.00px;color:#222;white-space:nowrap;letter-spacing:0.346px;left:370.50px;">(Select All)</div>
<div style="position:absolute;left:344.00px;top:506.08px;width:10.00px;height:0.00px;border-top:1px dotted #9a9a9a;"></div>
<div style="position:absolute;left:354.50px;top:499.08px;width:12.00px;height:12.00px;background:#fff;border:1px solid #8e8e8e;box-sizing:border-box;"></div>
<svg style="position:absolute;left:355.50px;top:500.08px" width="10" height="10" viewBox="0 0 10 10"><path d="M1.5 5l2.5 3L8.5 1.800" fill="none" stroke="#111" stroke-width="2.2"/></svg>
<div style="position:absolute;top:497.98px;line-height:16px;font-size:12.00px;color:#222;white-space:nowrap;letter-spacing:-0.214px;left:370.50px;">1.29</div>
<div style="position:absolute;left:344.00px;top:526.16px;width:10.00px;height:0.00px;border-top:1px dotted #9a9a9a;"></div>
<div style="position:absolute;left:354.50px;top:519.16px;width:12.00px;height:12.00px;background:#fff;border:1px solid #8e8e8e;box-sizing:border-box;"></div>
<svg style="position:absolute;left:355.50px;top:520.16px" width="10" height="10" viewBox="0 0 10 10"><path d="M1.5 5l2.5 3L8.5 1.800" fill="none" stroke="#111" stroke-width="2.2"/></svg>
<div style="position:absolute;top:518.06px;line-height:16px;font-size:12.00px;color:#222;white-space:nowrap;letter-spacing:-0.214px;left:370.50px;">1.99</div>
<div style="position:absolute;left:344.00px;top:546.24px;width:10.00px;height:0.00px;border-top:1px dotted #9a9a9a;"></div>
<div style="position:absolute;left:354.50px;top:539.24px;width:12.00px;height:12.00px;background:#fff;border:1px solid #8e8e8e;box-sizing:border-box;"></div>
<svg style="position:absolute;left:355.50px;top:540.24px" width="10" height="10" viewBox="0 0 10 10"><path d="M1.5 5l2.5 3L8.5 1.800" fill="none" stroke="#111" stroke-width="2.2"/></svg>
<div style="position:absolute;top:538.14px;line-height:16px;font-size:12.00px;color:#222;white-space:nowrap;letter-spacing:-0.214px;left:370.50px;">4.99</div>
<div style="position:absolute;left:344.00px;top:566.32px;width:10.00px;height:0.00px;border-top:1px dotted #9a9a9a;"></div>
<div style="position:absolute;left:354.50px;top:559.32px;width:12.00px;height:12.00px;background:#fff;border:1px solid #8e8e8e;box-sizing:border-box;"></div>
<svg style="position:absolute;left:355.50px;top:560.32px" width="10" height="10" viewBox="0 0 10 10"><path d="M1.5 5l2.5 3L8.5 1.800" fill="none" stroke="#111" stroke-width="2.2"/></svg>
<div style="position:absolute;top:558.22px;line-height:16px;font-size:12.00px;color:#222;white-space:nowrap;letter-spacing:-0.214px;left:370.50px;">8.99</div>
<div style="position:absolute;left:344.00px;top:586.40px;width:10.00px;height:0.00px;border-top:1px dotted #9a9a9a;"></div>
<div style="position:absolute;left:354.50px;top:579.40px;width:12.00px;height:12.00px;background:#fff;border:1px solid #8e8e8e;box-sizing:border-box;"></div>
<svg style="position:absolute;left:355.50px;top:580.40px" width="10" height="10" viewBox="0 0 10 10"><path d="M1.5 5l2.5 3L8.5 1.800" fill="none" stroke="#111" stroke-width="2.2"/></svg>
<div style="position:absolute;top:578.30px;line-height:16px;font-size:12.00px;color:#222;white-space:nowrap;letter-spacing:-0.146px;left:370.50px;">12.49</div>
<div style="position:absolute;left:344.00px;top:606.48px;width:10.00px;height:0.00px;border-top:1px dotted #9a9a9a;"></div>
<div style="position:absolute;left:354.50px;top:599.48px;width:12.00px;height:12.00px;background:#fff;border:1px solid #8e8e8e;box-sizing:border-box;"></div>
<svg style="position:absolute;left:355.50px;top:600.48px" width="10" height="10" viewBox="0 0 10 10"><path d="M1.5 5l2.5 3L8.5 1.800" fill="none" stroke="#111" stroke-width="2.2"/></svg>
<div style="position:absolute;top:598.38px;line-height:16px;font-size:12.00px;color:#222;white-space:nowrap;letter-spacing:-0.146px;left:370.50px;">19.99</div>
<div style="position:absolute;left:344.00px;top:626.56px;width:10.00px;height:0.00px;border-top:1px dotted #9a9a9a;"></div>
<div style="position:absolute;left:354.50px;top:619.56px;width:12.00px;height:12.00px;background:#fff;border:1px solid #8e8e8e;box-sizing:border-box;"></div>
<svg style="position:absolute;left:355.50px;top:620.56px" width="10" height="10" viewBox="0 0 10 10"><path d="M1.5 5l2.5 3L8.5 1.800" fill="none" stroke="#111" stroke-width="2.2"/></svg>
<div style="position:absolute;top:618.46px;line-height:16px;font-size:12.00px;color:#222;white-space:nowrap;letter-spacing:-0.146px;left:370.50px;">23.95</div>
<div style="position:absolute;left:344.00px;top:646.64px;width:10.00px;height:0.00px;border-top:1px dotted #9a9a9a;"></div>
<div style="position:absolute;left:354.50px;top:639.64px;width:12.00px;height:12.00px;background:#fff;border:1px solid #8e8e8e;box-sizing:border-box;"></div>
<svg style="position:absolute;left:355.50px;top:640.64px" width="10" height="10" viewBox="0 0 10 10"><path d="M1.5 5l2.5 3L8.5 1.800" fill="none" stroke="#111" stroke-width="2.2"/></svg>
<div style="position:absolute;top:638.54px;line-height:16px;font-size:12.00px;color:#222;white-space:nowrap;letter-spacing:-0.067px;left:370.50px;">125.00</div>
<div style="position:absolute;left:343.50px;top:491.00px;width:0.00px;height:0.00px;"></div>
<div style="position:absolute;left:409.00px;top:680.00px;width:82.00px;height:24.00px;background:linear-gradient(#f4f4f4,#e4e4e4);border:1px solid #adadad;box-sizing:border-box;"></div>
<div style="position:absolute;left:503.00px;top:680.00px;width:81.50px;height:24.00px;background:linear-gradient(#f4f4f4,#e4e4e4);border:1px solid #adadad;box-sizing:border-box;"></div>
<div style="position:absolute;top:685.00px;line-height:16px;font-size:12.00px;color:#222;white-space:nowrap;letter-spacing:-0.169px;left:442.00px;">OK</div>
<div style="position:absolute;top:685.00px;line-height:16px;font-size:12.00px;color:#222;white-space:nowrap;letter-spacing:-0.176px;left:525.00px;">Cancel</div>
<div style="position:absolute;left:295.50px;top:709.40px;width:296.50px;height:1.00px;background:#dfe8f2;"></div>
<div style="position:absolute;left:586.00px;top:717.00px;width:2.00px;height:2.00px;background:#9c9c9c;"></div>
<div style="position:absolute;left:582.00px;top:717.00px;width:2.00px;height:2.00px;background:#9c9c9c;"></div>
<div style="position:absolute;left:586.00px;top:713.00px;width:2.00px;height:2.00px;background:#9c9c9c;"></div>
<div style="position:absolute;left:592.6px;top:389.7px;width:125.700px;height:164.3px;background:#fff;border:1px solid #c6c6c6;box-sizing:border-box;box-shadow:2px 2px 4px rgba(0,0,0,.25)"></div>
<div style="position:absolute;top:397.50px;line-height:17px;font-size:13.00px;color:#46546a;white-space:nowrap;letter-spacing:-0.279px;font-weight:bold;left:604.00px;">Filter by Cell Color</div>
<div style="position:absolute;left:628.00px;top:423.00px;width:56.00px;height:17.00px;background:#ffffff;border:1px solid #8c8c8c;box-sizing:border-box;"></div>
<div style="position:absolute;left:628.00px;top:449.90px;width:56.00px;height:17.00px;background:#ffc000;border:1px solid #8c8c8c;box-sizing:border-box;"></div>
<div style="position:absolute;left:628.00px;top:476.80px;width:56.00px;height:17.00px;background:#ffff00;border:1px solid #8c8c8c;box-sizing:border-box;"></div>
<div style="position:absolute;left:628.00px;top:503.70px;width:56.00px;height:17.00px;background:#5b9bd5;border:1px solid #8c8c8c;box-sizing:border-box;"></div>
<div style="position:absolute;left:628.00px;top:530.60px;width:56.00px;height:17.00px;background:#fce4d6;border:1px solid #8c8c8c;box-sizing:border-box;"></div>
</body></html>
